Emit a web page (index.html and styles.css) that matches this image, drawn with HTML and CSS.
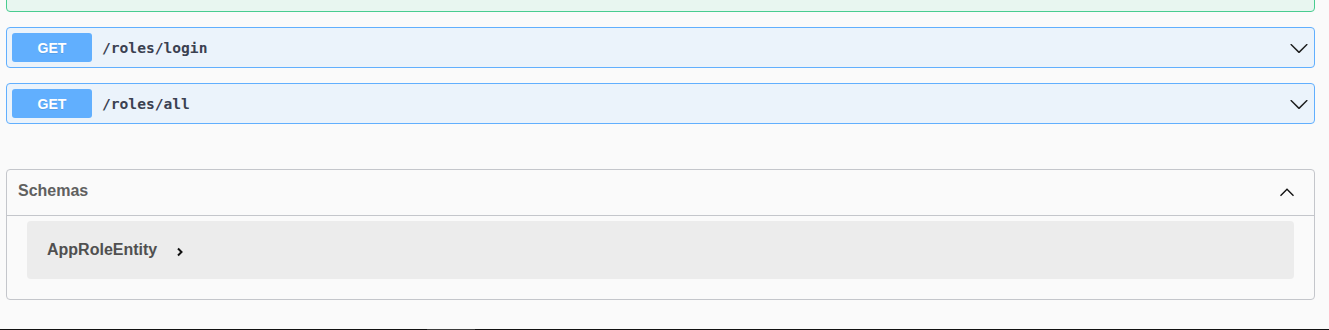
FILE: index.html
```html
<!DOCTYPE html>
<html lang="en">
<head>
<meta charset="utf-8">
<title>Swagger UI</title>
<link rel="stylesheet" href="styles.css">
</head>
<body>
<div class="page">
  <div class="opblock opblock-post"></div>

  <div class="opblock opblock-get">
    <div class="summary">
      <span class="method">GET</span>
      <span class="path">/roles/login</span>
      <svg class="arrow" width="20" height="20" viewBox="0 0 20 20"><path d="M17.418 6.109c.272-.268.709-.268.979 0s.271.701 0 .969l-7.908 7.830c-.27.268-.707.268-.979 0l-7.908-7.830c-.27-.268-.27-.701 0-.969.271-.268.709-.268.979 0L10 13.25l7.418-7.141z"/></svg>
    </div>
  </div>

  <div class="opblock opblock-get">
    <div class="summary">
      <span class="method">GET</span>
      <span class="path">/roles/all</span>
      <svg class="arrow" width="20" height="20" viewBox="0 0 20 20"><path d="M17.418 6.109c.272-.268.709-.268.979 0s.271.701 0 .969l-7.908 7.830c-.27.268-.707.268-.979 0l-7.908-7.830c-.27-.268-.27-.701 0-.969.271-.268.709-.268.979 0L10 13.25l7.418-7.141z"/></svg>
    </div>
  </div>

  <section class="models">
    <h4 class="models-header">
      <span>Schemas</span>
      <svg class="up" width="16" height="10" viewBox="0 0 16 10"><polyline points="1.5,8.7 8,2.2 14.5,8.7"/></svg>
    </h4>
    <div class="models-body">
      <div class="model-container">
        <span class="model-title">AppRoleEntity</span>
        <svg class="chev" width="8" height="10" viewBox="0 0 8 10"><polyline points="2,1.5 5.5,5 2,8.5"/></svg>
      </div>
    </div>
  </section>
</div>
<div class="taskbar-edge"></div>
</body>
</html>
```
FILE: styles.css
```css
html, body {
  margin: 0;
  padding: 0;
  background: #fafafa;
  overflow: hidden;
}

body {
  height: 330px;
  display: flex;
  flex-direction: column;
  justify-content: space-between;
  font-family: "Liberation Sans", Arial, sans-serif;
}

.page {
  width: 1309px;
  padding-left: 6px;
  display: flex;
  flex-direction: column;
}

.opblock {
  border: 1px solid #61affe;
  border-radius: 4px;
  margin-bottom: 15px;
}

.opblock-post {
  margin-top: -30px;
  height: 40px;
  border-color: #49cc90;
  background: #e8f6f0;
}

.opblock-get {
  background: #ebf3fb;
}

.summary {
  display: flex;
  align-items: center;
  padding: 5px;
}

.method {
  width: 80px;
  height: 29px;
  border-radius: 3px;
  background: #61affe;
  color: #fff;
  font-weight: bold;
  font-size: 14px;
  line-height: 31px;
  text-align: center;
  text-shadow: 0 1px 0 rgba(0,0,0,.1);
}

.path {
  flex: 1;
  padding: 0 10px;
  font-family: "DejaVu Sans Mono", "Liberation Mono", monospace;
  font-weight: bold;
  font-size: 14.6px;
  line-height: 18px;
  padding-top: 1px;
  color: #3b4151;
}

.arrow {
  display: block;
  fill: #1e1e1e;
}

.models {
  margin-top: 30px;
  border: 1px solid #c4c6cb;
  border-radius: 4px;
}

.models-header {
  margin: 0;
  height: 46px;
  padding: 0 20px 3px 11px;
  box-sizing: border-box;
  display: flex;
  align-items: center;
  justify-content: space-between;
  border-bottom: 1px solid #c4c6cb;
  font-size: 16px;
  font-weight: bold;
  color: #606060;
}

.models-header span {
  line-height: 20px;
}

.up {
  display: block;
  margin-top: 1px;
  margin-right: -1px;
  fill: none;
  stroke: #111;
  stroke-width: 1.4;
}

.models-body {
  padding: 5px 20px 20px;
}

.model-container {
  height: 58px;
  border-radius: 4px;
  background: #ececec;
  display: flex;
  align-items: center;
  padding-left: 20px;
}

.model-title {
  font-size: 16px;
  font-weight: bold;
  color: #505050;
}

.chev {
  display: block;
  margin-left: 19px;
  margin-top: 4px;
  fill: none;
  stroke: #111;
  stroke-width: 2;
}

.taskbar-edge {
  height: 1px;
  background: linear-gradient(to right, #111 427px, #3c3c3c 427px, #3c3c3c 475px, #111 475px);
}
```
